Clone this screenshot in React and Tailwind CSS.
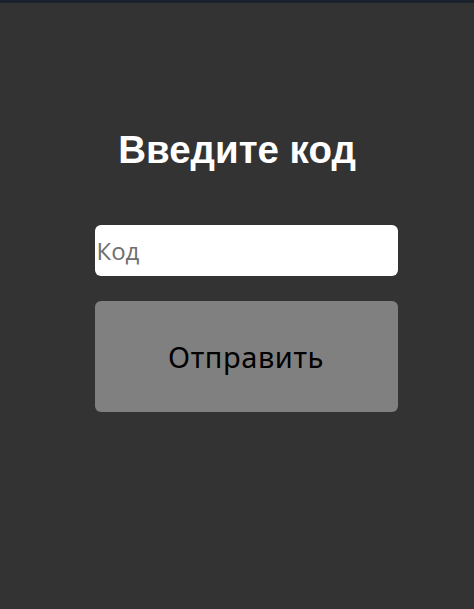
import React from 'react';

const App = () => {
    return (
        <div className="min-h-[609px] bg-[#333333] border-t-[3px] border-[#1c222c] flex flex-col items-center font-['Liberation_Sans',Arial,sans-serif]">
            {/* Title */}
            <h1 className="mt-[121px] text-[38.5px] leading-[52px] font-bold text-white">Введите код</h1>

            {/* Form */}
            <div className="mt-[49px] ml-[18px] w-[303px] flex flex-col gap-[25px]">
                <input
                    type="text"
                    placeholder="Код"
                    className="h-[51px] w-full rounded-[6px] bg-white px-[2px] text-[24px] text-black placeholder-[#6f6f6f] outline-none font-['Open_Sans',sans-serif]"
                />
                <button className="h-[111px] w-full rounded-[6px] bg-[#808080] text-[29px] tracking-[0.6px] text-black font-['Noto_Sans',sans-serif]">
                    Отправить
                </button>
            </div>
        </div>
    );
};

export default App;
